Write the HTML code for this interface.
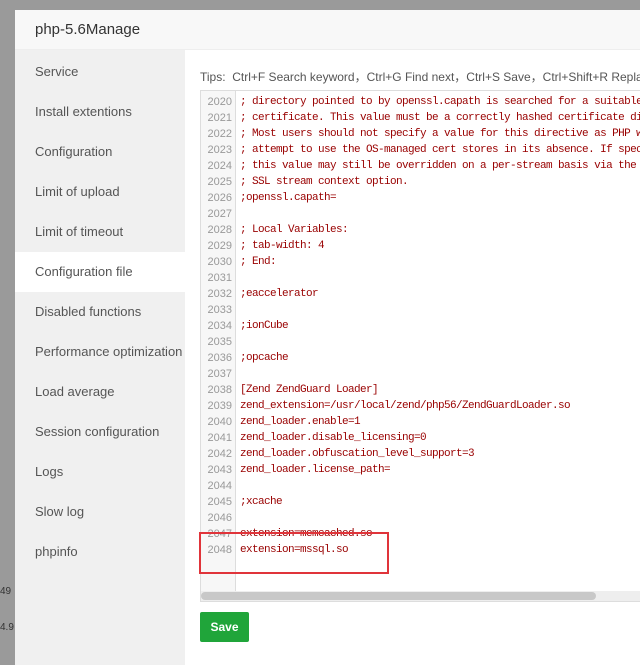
<!DOCTYPE html>
<html><head><style>
*{margin:0;padding:0;box-sizing:border-box}
html,body{width:640px;height:665px;overflow:hidden}
body{background:#9a9a9a;font-family:"Liberation Sans","Noto Sans CJK SC",sans-serif;position:relative}
.modal{position:absolute;left:15px;top:10px;width:640px;height:670px;background:#fff}
.hd{height:40px;background:#f8f8f8;border-bottom:1px solid #eee;font-size:15px;color:#333;padding-left:20px;line-height:40px}
.side{position:absolute;left:0;top:40px;padding-top:2px;width:170px;height:640px;background:#f0f0f0}
.side div{height:40px;line-height:40px;padding-left:20px;font-size:13px;color:#555;white-space:nowrap}
.side .act{background:#fff}
.tips{position:absolute;left:185px;top:58px;font-size:12px;color:#555;white-space:nowrap}
.ed{position:absolute;left:185px;top:80px;width:460px;height:512px;border:1px solid #ddd;overflow:hidden;background:#fff}
.gut{position:absolute;left:0;top:0;width:35px;height:100%;background:#f7f7f7;border-right:1px solid #ddd}
.ln{position:absolute;left:0;width:31px;text-align:right;font-size:11px;color:#999;font-family:"Liberation Sans",sans-serif}
.cd{position:absolute;left:39px;font-size:11px;letter-spacing:-0.6px;color:#900;font-family:"Liberation Mono","Noto Serif CJK SC",monospace;white-space:pre}
.sb{position:absolute;left:0;bottom:0;width:100%;height:10px;background:#eee}
.th{position:absolute;left:0;top:1px;width:395px;height:8px;background:#c8c8c8;border-radius:4px}
.save{position:absolute;left:185px;top:602px;width:49px;height:30px;background:#20a53a;color:#fff;font-size:12px;font-weight:bold;border-radius:2px;text-align:center;line-height:30px}
.box{position:absolute;left:199px;top:532px;width:190px;height:42px;border:2px solid #e0343a}
</style></head><body>
<div style="position:absolute;left:0;top:586px;font-size:10px;color:#333">49</div>
<div style="position:absolute;left:0;top:622px;font-size:10px;color:#333">4.9</div>
<div class="modal">
<div class="hd">php-5.6Manage</div>
<div class="side">
<div>Service</div><div>Install extentions</div><div>Configuration</div><div>Limit of upload</div><div>Limit of timeout</div><div class="act">Configuration file</div><div>Disabled functions</div><div>Performance optimization</div><div>Load average</div><div>Session configuration</div><div>Logs</div><div>Slow log</div><div>phpinfo</div>
</div>
<div class="tips">Tips:&nbsp; Ctrl+F Search keyword，Ctrl+G Find next，Ctrl+S Save，Ctrl+Shift+R Replace</div>
<div class="ed"><div class="gut"></div>
<div id="lines"></div>
<div class="sb"><div class="th"></div></div>
</div>
<div class="save">Save</div>
</div>
<div class="box"></div>
<script>
var c=["; directory pointed to by openssl.capath is searched for a suitable",
"; certificate. This value must be a correctly hashed certificate directory.",
"; Most users should not specify a value for this directive as PHP will",
"; attempt to use the OS-managed cert stores in its absence. If specified,",
"; this value may still be overridden on a per-stream basis via the",
"; SSL stream context option.",";openssl.capath=","","; Local Variables:","; tab-width: 4","; End:","",";eaccelerator","",";ionCube","",";opcache","","[Zend ZendGuard Loader]","zend_extension=/usr/local/zend/php56/ZendGuardLoader.so","zend_loader.enable=1","zend_loader.disable_licensing=0","zend_loader.obfuscation_level_support=3","zend_loader.license_path=","",";xcache","","extension=memcached.so","extension=mssql.so"];
var h="";for(var i=0;i<c.length;i++){var y=5+i*16;h+='<div class="ln" style="top:'+y+'px">'+(2020+i)+'</div><div class="cd" style="top:'+y+'px">'+c[i].replace(/</g,"&lt;")+'</div>';}
document.getElementById("lines").innerHTML=h;
</script>
</body></html>
